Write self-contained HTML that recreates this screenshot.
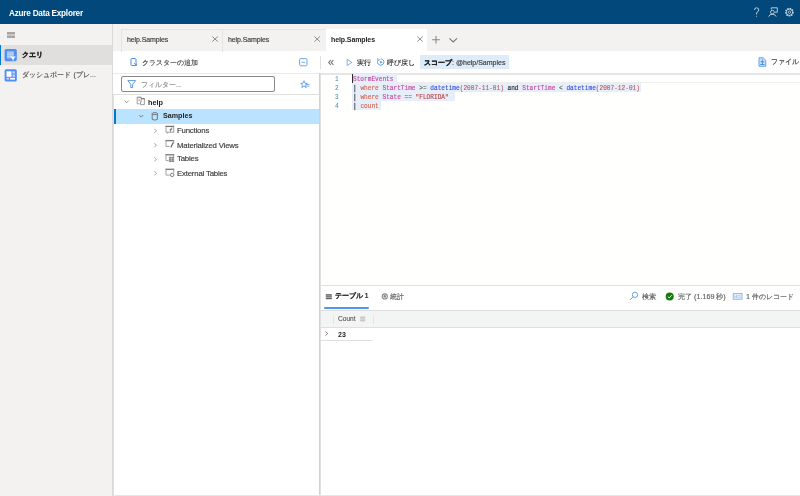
<!DOCTYPE html>
<html><head><meta charset="utf-8">
<style>
*{margin:0;padding:0;box-sizing:border-box}
html,body{width:800px;height:496px;overflow:hidden;background:#fff;font-family:"Liberation Sans",sans-serif;color:#323130;position:relative}
.a{position:absolute;white-space:nowrap;line-height:1;will-change:transform;-webkit-text-stroke-width:0.15px}
[style*="font-weight:bold"],b{-webkit-text-stroke-width:0}
svg{position:absolute;overflow:visible}
.mono{font-family:"Liberation Mono",monospace;font-size:6.1px;letter-spacing:0.02px;line-height:1;transform:scaleY(1.2);transform-origin:0 0;-webkit-text-stroke-width:0.12px}
.ln{color:#3f86a0;font-family:"Liberation Mono",monospace;font-size:6.1px;transform:scaleY(1.2);transform-origin:0 0;-webkit-text-stroke-width:0}
.hl{position:absolute;left:352px;height:9.1px;background:#e6eefa}
.k{color:#d5654f}.c{color:#c8469e}.f{color:#3b4fe0}.n{color:#b85a5a}.s{color:#b94343}.o{color:#3a3a3a;-webkit-text-stroke:0.25px #3a3a3a}.op{color:#5a5a5a}
</style></head><body>
<!-- header -->
<div class="a" style="left:0;top:0;width:800px;height:24px;background:#02487b"></div>
<div class="a" style="left:9.2px;top:9.9px;font-size:8.2px;color:#fff;font-weight:bold;letter-spacing:-0.23px">Azure Data Explorer</div>
<svg style="left:0;top:0" width="800" height="24">
 <path d="M754.5 10 Q754.5 7.8 756.6 7.8 Q758.8 7.8 758.8 10 Q758.8 11.6 756.6 12.6 L756.6 14.6" fill="none" stroke="#c9d6e3" stroke-width="0.9"/>
 <circle cx="756.6" cy="16.2" r="0.5" fill="#c9d6e3"/>
 <path d="M771.3 9.5 L771.3 7.8 L777.3 7.8 L777.3 12.2 L775 12.2" fill="none" stroke="#c9d6e3" stroke-width="0.9"/>
 <circle cx="772.4" cy="12.2" r="1.9" fill="#02487b" stroke="#c9d6e3" stroke-width="0.9"/>
 <path d="M768.6 16.6 Q769.6 14.2 772.4 14.2 Q775.2 14.2 776.2 16.6" fill="none" stroke="#c9d6e3" stroke-width="0.9"/>
 <circle cx="789.4" cy="12.2" r="3.6" fill="none" stroke="#c9d6e3" stroke-width="1.6" stroke-dasharray="1.4 1"/>
 <circle cx="789.4" cy="12.2" r="3.2" fill="none" stroke="#c9d6e3" stroke-width="0.8"/>
 <circle cx="789.4" cy="12.2" r="1.2" fill="none" stroke="#c9d6e3" stroke-width="0.8"/>
</svg>
<!-- left nav -->
<div class="a" style="left:0;top:24px;width:112px;height:472px;background:#f3f2f1"></div>
<div class="a" style="left:112px;top:24px;width:1px;height:472px;background:#dcdad8"></div>
<div class="a" style="left:6.6px;top:32.2px;width:8.2px;height:5.8px;background:#c8c6c4;border-top:2px solid #a8a6a4;border-bottom:2px solid #a8a6a4"></div>
<div class="a" style="left:0;top:45px;width:112px;height:20px;background:#e1dfdd"></div>
<div class="a" style="left:0;top:45px;width:1px;height:20px;background:#0078d4"></div>
<svg style="left:0;top:0" width="120" height="90">
 <rect x="4.6" y="49" width="12.2" height="12.2" rx="1.6" fill="#4f8ff7"/>
 <rect x="7" y="51.3" width="6.8" height="7.2" fill="#9dc0fa"/>
 <path d="M7 52.8 L13.8 52.8 M7 54.6 L13.8 54.6 M7 56.4 L11 56.4" stroke="#c9dcfd" stroke-width="0.7"/>
 <path d="M10.3 56.6 L15.8 56.6 L13.5 59.2 L13.5 60.8 L12.6 60.8 L12.6 59.2 Z" fill="#fff"/>
 <rect x="4.6" y="69.3" width="12.2" height="12.2" rx="1.6" fill="#4f8ff7"/>
 <rect x="6.5" y="71.3" width="5" height="5.5" fill="#fff"/>
 <rect x="12.5" y="71.3" width="2.5" height="2.2" fill="#c3d8fc"/>
 <rect x="12.5" y="74.5" width="2.5" height="2.2" fill="#c3d8fc"/>
 <rect x="6.5" y="77.8" width="2.5" height="1.8" fill="#c3d8fc"/>
 <rect x="10" y="77.8" width="5" height="1.8" fill="#fff"/>
</svg>
<div class="a" style="left:22px;top:52.2px;font-size:6.8px;font-weight:bold;color:#252423;-webkit-text-stroke-width:0.25px">クエリ</div>
<div class="a" style="left:21.6px;top:71.5px;font-size:6.8px;letter-spacing:0.08px;color:#4f4d4b">ダッシュボード (プレ...</div>
<!-- tab bar -->
<div class="a" style="left:113px;top:24px;width:687px;height:27px;background:#f3f2f1"></div>
<div class="a" style="left:121px;top:28.5px;width:102px;height:22.5px;border:1px solid #e6e4e2;border-bottom:none"></div>
<div class="a" style="left:222.5px;top:28.5px;width:104px;height:22.5px;border:1px solid #e6e4e2;border-bottom:none;border-left:none"></div>
<div class="a" style="left:326px;top:28.5px;width:101px;height:22.5px;background:#fff"></div>
<div class="a" style="left:127px;top:36.3px;font-size:7px;letter-spacing:-0.1px;color:#3b3a39">help.Samples</div>
<div class="a" style="left:228.4px;top:36.3px;font-size:7px;letter-spacing:-0.1px;color:#3b3a39">help.Samples</div>
<div class="a" style="left:331px;top:36.3px;font-size:7px;letter-spacing:-0.1px;color:#252423;font-weight:bold">help.Samples</div>
<svg style="left:0;top:0" width="800" height="60">
 <path d="M212.3 36.5 L217.8 41.6 M217.8 36.5 L212.3 41.6" stroke="#767472" stroke-width="0.8"/>
 <path d="M314.4 36.5 L319.9 41.6 M319.9 36.5 L314.4 41.6" stroke="#767472" stroke-width="0.8"/>
 <path d="M417.3 36.5 L422.8 41.6 M422.8 36.5 L417.3 41.6" stroke="#767472" stroke-width="0.8"/>
 <path d="M436 36 L436 43.6 M432.1 39.8 L439.9 39.8" stroke="#8a8886" stroke-width="1.1"/>
 <path d="M449.4 38.3 L453.2 42 L457 38.3" fill="none" stroke="#767472" stroke-width="1.05"/>
</svg>
<!-- cluster panel -->
<svg style="left:0;top:0" width="330" height="100">
 <rect x="131" y="58.5" width="5" height="7" rx="0.8" fill="none" stroke="#4a8ee6" stroke-width="1"/>
 <path d="M134 63 L136.5 65.5 M136.5 63.5 L136.5 65.5 L134.5 65.5" fill="none" stroke="#4a8ee6" stroke-width="0.8"/>
 <rect x="299.6" y="58.6" width="7.4" height="7.2" rx="1.2" fill="none" stroke="#6aa5ec" stroke-width="1"/>
 <path d="M301.6 62.3 L305 62.3" stroke="#6aa5ec" stroke-width="0.9"/>
 <path d="M127.8 80.6 L135.6 80.6 L132.6 84.3 L132.6 87.6 L130.8 87.6 L130.8 84.3 Z" fill="none" stroke="#4a8ee6" stroke-width="0.9" stroke-linejoin="round"/>
 <path d="M304 80.8 L305 83.3 L307.3 83.3 L305.5 84.8 L306.2 87.6 L304 86 L301.8 87.6 L302.5 84.8 L300.7 83.3 L303 83.3 Z" fill="none" stroke="#4a8ee6" stroke-width="0.8"/>
 <path d="M306 84.5 L309.5 84.5 M306.5 86.2 L309.5 86.2" stroke="#4a8ee6" stroke-width="0.7"/>
</svg>
<div class="a" style="left:142px;top:59.1px;font-size:7px;color:#4a4846">クラスターの追加</div>
<div class="a" style="left:113px;top:73px;width:207px;height:1px;background:#edebe9"></div>
<div class="a" style="left:121.3px;top:76px;width:153.6px;height:16.3px;border:1px solid #8a8886;border-radius:2px"></div>
<div class="a" style="left:140.5px;top:81.5px;font-size:6.8px;color:#8f8d8b">フィルター...</div>
<div class="a" style="left:113px;top:94px;width:207px;height:402px;border-top:1px solid #e1dfdd;border-left:1px solid #e1dfdd;border-right:1px solid #d2d2d6"></div>
<!-- tree -->
<div class="a" style="left:114px;top:109.2px;width:205px;height:14.6px;background:#b9e3fe"></div>
<div class="a" style="left:114px;top:109.2px;width:2px;height:14.6px;background:#0078d4"></div>
<svg style="left:0;top:0" width="330" height="190">
 <path d="M124.7 100.7 L126.7 102.7 L128.7 100.7" fill="none" stroke="#8a8886" stroke-width="0.95"/>
 <path d="M139.2 115.1 L141.2 117.1 L143.2 115.1" fill="none" stroke="#797775" stroke-width="0.95"/>
 <path d="M137.2 97.3 L141.2 97.3 M141.2 98.6 L144.6 98.6" stroke="#797775" stroke-width="1.1"/><path d="M137.2 97 L137.2 103.8 L139.6 103.8 M141.2 97 L141.2 102 M144.4 98.3 L144.4 104.6 L140.5 104.6 L140.5 101.5" fill="none" stroke="#8a8886" stroke-width="0.8"/><rect x="138.3" y="99" width="2" height="2.2" fill="#c8c6c4"/>
 <ellipse cx="154.8" cy="113.6" rx="2.6" ry="1" fill="none" stroke="#605e5c" stroke-width="0.8"/>
 <path d="M152.2 113.6 L152.2 119.4 Q154.8 120.8 157.4 119.4 L157.4 113.6" fill="none" stroke="#605e5c" stroke-width="0.8"/>
 <g fill="none" stroke="#8a8886" stroke-width="0.8">
  <path d="M154.4 128.8 L156.4 130.8 L154.4 132.8"/>
  <path d="M154.4 143.2 L156.4 145.2 L154.4 147.2"/>
  <path d="M154.4 157.3 L156.4 159.3 L154.4 161.3"/>
  <path d="M154.4 171.3 L156.4 173.3 L154.4 175.3"/>
 </g>
 <g>
<path d="M165.6 126.39999999999999 L174.1 126.39999999999999" stroke="#797775" stroke-width="1.3"/><path d="M166.0 125.8 L166.0 132.2 L169.1 132.2 M173.7 125.8 L173.7 132.2" fill="none" stroke="#8a8886" stroke-width="0.8"/><path d="M168.1 132.2 L167.2 133.6" stroke="#8a8886" stroke-width="0.8"/><path d="M172.4 128.0 Q171.2 127.6 170.9 129.0 L170.0 133.0 M169.7 129.6 L171.9 129.6" fill="none" stroke="#605e5c" stroke-width="0.75"/><path d="M170.6 132.2 L174.1 132.2" stroke="#8a8886" stroke-width="0.8"/>
<path d="M165.6 140.6 L174.1 140.6" stroke="#797775" stroke-width="1.3"/><path d="M166.0 140.0 L166.0 146.4 L169.6 146.4 M173.7 140.0 L173.7 143.5" fill="none" stroke="#8a8886" stroke-width="0.8"/><path d="M173.2 142.6 L170.79999999999998 147.6" stroke="#605e5c" stroke-width="1.1"/>
<path d="M165.6 154.79999999999998 L174.1 154.79999999999998" stroke="#797775" stroke-width="1.3"/><path d="M166.0 154.2 L166.0 160.6 L168.6 160.6 M173.7 154.2 L173.7 157.2" fill="none" stroke="#8a8886" stroke-width="0.8"/><rect x="168.9" y="156.79999999999998" width="5.2" height="5.2" fill="#8a8886"/><path d="M168.9 158.5 L174.1 158.5 M168.9 160.2 L174.1 160.2 M171.5 156.79999999999998 L171.5 162.0" stroke="#d8d6d4" stroke-width="0.4"/>
<path d="M165.6 169.29999999999998 L174.1 169.29999999999998" stroke="#797775" stroke-width="1.3"/><path d="M166.0 168.7 L166.0 175.1 L169.79999999999998 175.1 M173.7 168.7 L173.7 172.7" fill="none" stroke="#8a8886" stroke-width="0.8"/><circle cx="172.2" cy="174.89999999999998" r="1.7" fill="none" stroke="#605e5c" stroke-width="0.8"/>
 </g>
</svg>
<div class="a" style="left:148.3px;top:98.6px;font-size:7.3px;font-weight:bold;color:#252423">help</div>
<div class="a" style="left:162.7px;top:113px;font-size:7.15px;font-weight:bold;color:#252423">Samples</div>
<div class="a" style="left:176.7px;top:127.3px;font-size:7.8px;letter-spacing:-0.19px;color:#3b3a39">Functions</div>
<div class="a" style="left:176.7px;top:141.6px;font-size:7.8px;letter-spacing:-0.19px;color:#3b3a39">Materialized Views</div>
<div class="a" style="left:176.7px;top:155.4px;font-size:7.8px;letter-spacing:-0.19px;color:#3b3a39">Tables</div>
<div class="a" style="left:176.7px;top:169.6px;font-size:7.8px;letter-spacing:-0.19px;color:#3b3a39">External Tables</div>
<!-- editor -->
<div class="a" style="left:320px;top:73px;width:1px;height:423px;background:#e0e0e3"></div>
<div class="a" style="left:319px;top:73px;width:1px;height:21px;background:#d2d2d6"></div>
<div class="a" style="left:320px;top:55.5px;width:1px;height:13px;background:#e1dfdd"></div>
<div class="a" style="left:321px;top:73px;width:479px;height:1.5px;background:#e8e6e4"></div>
<div class="a" style="left:321px;top:74.5px;width:479px;height:210.5px;background:#fffffe"></div>
<svg style="left:0;top:0" width="800" height="75">
 <path d="M330.8 60.2 L328.7 62.5 L330.8 64.8 M333.4 60.2 L331.3 62.5 L333.4 64.8" fill="none" stroke="#767472" stroke-width="1.1"/>
 <path d="M347.2 59.3 L351.9 62.4 L347.2 65.5 Z" fill="none" stroke="#5a9be8" stroke-width="0.8" stroke-linejoin="round"/>
 <path d="M378.2 60 A3.2 3.2 0 1 0 380.9 58.8" fill="none" stroke="#4a8ee6" stroke-width="0.9"/>
 <path d="M377.5 58.2 L378.2 60.3 L380.2 59.6" fill="none" stroke="#4a8ee6" stroke-width="0.8"/>
 <path d="M380.2 60.8 L382.6 62.2 L380.2 63.6 Z" fill="#4a8ee6"/>
 <path d="M759 57.8 L763.2 57.8 L765.8 60.4 L765.8 66.3 L759 66.3 Z" fill="#cfe1f9" stroke="#5a9be8" stroke-width="0.9"/>
 <path d="M762.4 59.5 L762.4 64.5 M760.5 61.8 L764.3 61.8 M760.2 64.5 L764.6 64.5" stroke="#3a7fd9" stroke-width="0.8"/>
</svg>
<div class="a" style="left:357.4px;top:59.7px;font-size:6.9px;color:#2b2a29">実行</div>
<div class="a" style="left:386.9px;top:59.6px;font-size:6.9px;color:#2b2a29">呼び戻し</div>
<div class="a" style="left:420px;top:55px;width:89px;height:14.3px;background:#deecf9"></div>
<div class="a" style="left:423.5px;top:59.1px;font-size:6.9px;color:#3b3a39"><b style="color:#252423;-webkit-text-stroke-width:0.25px">スコープ</b><span style="font-size:7px">: @help/Samples</span></div>
<div class="a" style="left:771px;top:59.1px;font-size:6.9px;color:#3b3a39">ファイル</div>
<!-- code -->
<div class="a" style="left:352px;top:82px;width:448px;height:1px;background:#eeeeee"></div>
<div class="hl" style="top:74px;width:44.8px"></div>
<div class="hl" style="top:83.1px;width:288.5px"></div>
<div class="hl" style="top:92.2px;width:103.3px"></div>
<div class="hl" style="top:101.3px;width:29.3px"></div>
<div class="a" style="left:351.9px;top:74px;width:1.3px;height:9.3px;background:#2a2a2a"></div>
<div class="a ln" style="left:335.2px;top:75.9px">1</div>
<div class="a ln" style="left:335.2px;top:85.0px">2</div>
<div class="a ln" style="left:335.2px;top:94.1px">3</div>
<div class="a ln" style="left:335.2px;top:103.2px">4</div>
<div class="a mono" style="left:352.5px;top:75.9px"><span class="c">StormEvents</span></div>
<div class="a mono" style="left:352.5px;top:85.0px"><span class="o">|</span> <span class="k">where</span> <span class="c">StartTime</span> <span class="op">&gt;=</span> <span class="f">datetime</span><span class="n">(2007-11-01)</span> <span style="color:#222">and</span> <span class="c">StartTime</span> <span class="op">&lt;</span> <span class="f">datetime</span><span class="n">(2007-12-01)</span></div>
<div class="a mono" style="left:352.5px;top:94.1px"><span class="o">|</span> <span class="k">where</span> <span class="c">State</span> <span class="op">==</span> <span class="s">"FLORIDA"</span></div>
<div class="a mono" style="left:352.5px;top:103.2px"><span class="o">|</span> <span class="k">count</span></div>
<!-- results -->
<div class="a" style="left:321px;top:285px;width:479px;height:1px;background:#e1dfdd"></div>
<svg style="left:0;top:0" width="800" height="345">
 <rect x="325.8" y="294.2" width="6" height="5" fill="#605e5c"/>
 <path d="M325.8 295.9 L331.8 295.9 M325.8 297.5 L331.8 297.5" stroke="#fff" stroke-width="0.5"/>
 <circle cx="384.8" cy="296.4" r="3.1" fill="#8a8886"/>
 <circle cx="384.8" cy="296.4" r="2" fill="#fff"/>
 <circle cx="384.8" cy="296.4" r="1.3" fill="#8a8886"/>
 <circle cx="635" cy="294.8" r="2.7" fill="none" stroke="#5a9be8" stroke-width="0.9"/>
 <path d="M633 296.8 L630.2 299.8" stroke="#5a9be8" stroke-width="1"/>
 <circle cx="669.7" cy="296.6" r="4" fill="#107c10"/>
 <path d="M667.8 296.7 L669.2 298 L671.7 295.2" fill="none" stroke="#fff" stroke-width="0.9"/>
 <rect x="733.2" y="293.6" width="8.8" height="5.6" fill="#eaf2fc" stroke="#7eb0ee" stroke-width="0.9"/>
 <path d="M734.6 295.5 L734.6 297.5 M735.8 295.5 L737.4 295.5 L737.4 296.5 L735.8 296.5 L735.8 297.5 L737.4 297.5 M738.4 295.5 L740.2 295.5 L740.2 297.5 L738.4 297.5" fill="none" stroke="#7eb0ee" stroke-width="0.5"/>
 <path d="M325.5 331.5 L327.7 333.5 L325.5 335.5" fill="none" stroke="#605e5c" stroke-width="0.8"/>
</svg>
<div class="a" style="left:334.8px;top:293.4px;font-size:6.5px;font-weight:bold;color:#323130;-webkit-text-stroke-width:0.1px">テーブル 1</div>
<div class="a" style="left:390.1px;top:293.6px;font-size:6.7px;color:#605e5c">統計</div>
<div class="a" style="left:324.4px;top:306.6px;width:44.6px;height:2px;background:#4a9ae8;border-radius:1px"></div>
<div class="a" style="left:642.2px;top:292.5px;font-size:7.2px;color:#605e5c">検索</div>
<div class="a" style="left:677.5px;top:292.5px;font-size:7.2px;color:#605e5c">完了 (1.169 秒)</div>
<div class="a" style="left:745.5px;top:292.5px;font-size:7.2px;color:#605e5c">1 件のレコード</div>
<div class="a" style="left:321px;top:310px;width:479px;height:18px;background:#f3f4f4;border-top:1px solid #e1dfdd;border-bottom:1px solid #e1dfdd"></div>
<div class="a" style="left:333px;top:314.5px;width:1px;height:8.5px;background:#e6e4e2"></div>
<div class="a" style="left:372.5px;top:314.5px;width:1px;height:8.5px;background:#e6e4e2"></div>
<svg style="left:0;top:0" width="800" height="345"><path d="M360.2 317.2 L365.2 317.2 M360.2 319 L365.2 319 M360.2 320.8 L365.2 320.8" stroke="#8a8886" stroke-width="0.6"/></svg>
<div class="a" style="left:338px;top:316.3px;font-size:6.6px;color:#605e5c">Count</div>
<div class="a" style="left:338px;top:331.3px;font-size:7px;font-weight:bold;color:#252423">23</div>
<div class="a" style="left:321px;top:340px;width:52px;height:1px;background:#e1dfdd"></div>
<div class="a" style="left:113px;top:495px;width:687px;height:1px;background:#e6e6e6"></div>
</body></html>
